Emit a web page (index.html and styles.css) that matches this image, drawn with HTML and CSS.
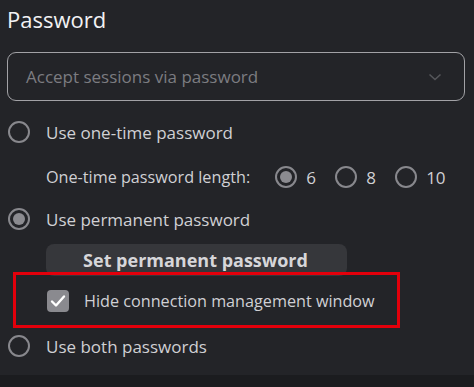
FILE: index.html
```html
<!DOCTYPE html>
<html>
<head>
<meta charset="utf-8">
<link rel="stylesheet" href="styles.css">
</head>
<body>
<div class="panel">
  <h1 class="title">Password</h1>
  <div class="select">
    <span class="placeholder">Accept sessions via password</span>
    <svg class="chevron" width="14" height="8" viewBox="0 0 14 8"><path d="M1.5 1.5 L7 6.5 L12.5 1.5" fill="none" stroke="#55565a" stroke-width="1.6"/></svg>
  </div>
  <div class="row r1"><span class="radio"></span><span class="label">Use one-time password</span></div>
  <div class="row r2 indent">
    <span class="label small">One-time password length:</span>
    <span class="opts">
      <span class="opt"><span class="radio on"></span><span class="label">6</span></span>
      <span class="opt"><span class="radio"></span><span class="label">8</span></span>
      <span class="opt"><span class="radio"></span><span class="label">10</span></span>
    </span>
  </div>
  <div class="row r3"><span class="radio on"></span><span class="label">Use permanent password</span></div>
  <div class="btn">Set permanent password</div>
  <div class="row r4 indent">
    <span class="check"><svg width="16" height="14" viewBox="0 0 16 14"><path d="M2 7.5 L6 11.5 L14 2.5" fill="none" stroke="#ffffff" stroke-width="2.4" stroke-linecap="round" stroke-linejoin="round"/></svg></span>
    <span class="label small">Hide connection management window</span>
  </div>
  <div class="row r5"><span class="radio"></span><span class="label">Use both passwords</span></div>
  <div class="highlight"></div>
</div>
<div class="footer"></div>
</body>
</html>
```
FILE: styles.css
```css
html, body {
  margin: 0;
  padding: 0;
  background: #232428;
}
body {
  font-family: "Open Sans", "Noto Sans", sans-serif;
  color: #d2d2d5;
  width: 474px;
  height: 387px;
  overflow: hidden;
}
.panel {
  position: relative;
  height: 375px;
  padding: 0 9px 0 7px;
  display: flex;
  flex-direction: column;
}
.title {
  margin: 0;
  height: 52px;
  line-height: 38px;
  font-size: 22px;
  font-weight: 400;
  color: #f2f2f4;
}
.select {
  box-sizing: border-box;
  height: 49px;
  border: 1.5px solid #a2a2a6;
  border-radius: 9px;
  display: flex;
  align-items: center;
  justify-content: space-between;
  padding: 0 22px 0 18px;
}
.placeholder {
  font-size: 17px;
  color: #7c7c81;
}
.chevron {
  display: block;
}
.row {
  display: flex;
  align-items: center;
}
.label {
  font-size: 17px;
  color: #d0d0d4;
}
.label.small {
  font-size: 16.2px;
}
.radio {
  box-sizing: border-box;
  width: 22px;
  height: 22px;
  border: 2px solid #88888d;
  border-radius: 50%;
  margin: 0 16px 0 1px;
  display: flex;
  align-items: center;
  justify-content: center;
  flex: none;
}
.radio.on::after {
  content: "";
  width: 12px;
  height: 12px;
  border-radius: 50%;
  background: #8b8b90;
}
.indent {
  padding-left: 39px;
}
.r1 { height: 36px; margin-top: 13px; }
.r2 { height: 54px; }
.r3 { height: 30px; }
.opts {
  display: flex;
  margin-left: 25px;
}
.opt {
  display: flex;
  align-items: center;
  width: 60px;
}
.opt .radio {
  margin: 0 9px 0 0;
}
.btn {
  box-sizing: border-box;
  margin: 10px 0 0 39px;
  width: 301px;
  height: 32px;
  border-radius: 8px;
  background: #36373b;
  color: #d6d6d9;
  font-size: 18px;
  font-weight: 700;
  display: flex;
  align-items: center;
  justify-content: center;
  padding-right: 2px;
}
.r4 { height: 42px; margin-top: 4px; }
.check {
  box-sizing: border-box;
  width: 22px;
  height: 22px;
  border-radius: 4px;
  background: #8a8a8f;
  margin: 0 15px 0 1px;
  display: flex;
  align-items: center;
  justify-content: center;
}
.check svg { display: block; }
.r5 { height: 36px; margin-top: 6px; }
.highlight {
  position: absolute;
  left: 13px;
  top: 272px;
  width: 387px;
  height: 56px;
  box-sizing: border-box;
  border: 3px solid #e3000b;
}
.footer {
  height: 12px;
  background: #1b1c1f;
}
```
